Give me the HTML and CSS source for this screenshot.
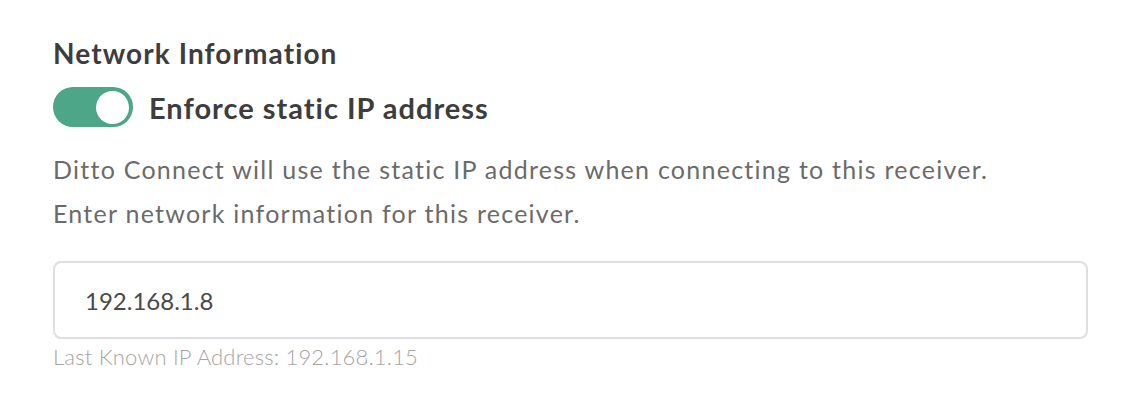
FILE: index.html
```html
<!DOCTYPE html>
<html>
<head>
<meta charset="utf-8">
<link rel="stylesheet" href="styles.css">
</head>
<body>
<section class="panel">
  <h2 class="title">Network Information</h2>
  <label class="toggle-row">
    <span class="switch"><span class="knob"></span></span>
    <span class="toggle-label">Enforce static IP address</span>
  </label>
  <p class="desc first">Ditto Connect will use the static IP address when connecting to this receiver.</p>
  <p class="desc">Enter network information for this receiver.</p>
  <div class="field">192.168.1.8</div>
  <p class="hint">Last Known IP Address: 192.168.1.15</p>
</section>
</body>
</html>
```
FILE: styles.css
```css
html, body { margin: 0; padding: 0; background: #fff; }
body { font-family: Lato, "Noto Sans", sans-serif; }
.panel {
  display: flex;
  flex-direction: column;
  padding: 36px 46px 0 53px;
}
.title {
  margin: 0;
  font-size: 28px;
  line-height: 34px;
  font-weight: 700;
  letter-spacing: 1.1px;
  color: #3d3d3d;
}
.toggle-row {
  display: flex;
  align-items: center;
  gap: 16px;
  margin-top: 17px;
}
.switch {
  width: 80px;
  height: 40px;
  border-radius: 20px;
  background: #4ca687;
  display: flex;
  align-items: center;
  justify-content: flex-end;
  padding-right: 4px;
  box-sizing: border-box;
}
.knob {
  width: 33px;
  height: 33px;
  border-radius: 50%;
  background: #fff;
}
.toggle-label {
  font-size: 29px;
  font-weight: 700;
  letter-spacing: 1px;
  color: #3d3d3d;
}
.desc {
  margin: 0;
  font-size: 25px;
  line-height: 44px;
  letter-spacing: 1.25px;
  color: #6b6b6b;
}
.desc.first { margin-top: 20px; }
.field {
  margin-top: 26px;
  height: 78px;
  box-sizing: border-box;
  border: 2px solid #dedee3;
  border-radius: 8px;
  padding: 0 30px;
  display: flex;
  align-items: center;
  font-size: 24px;
  color: #4a4a4a;
}
.hint {
  margin: 4px 0 0;
  font-size: 22px;
  line-height: 28px;
  font-weight: 300;
  letter-spacing: 0.2px;
  color: #a5a5a5;
}
```
